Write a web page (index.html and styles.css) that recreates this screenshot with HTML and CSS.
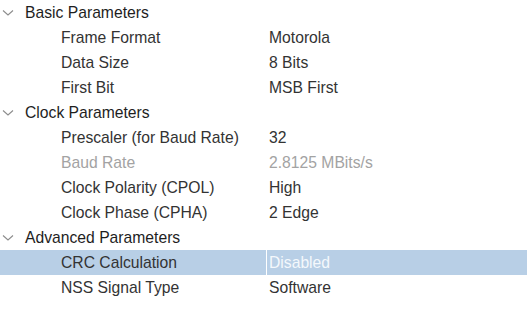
FILE: index.html
```html
<!DOCTYPE html>
<html>
<head>
<meta charset="utf-8">
<link rel="stylesheet" href="styles.css">
</head>
<body>
<div class="tree">
  <div class="row group"><svg class="chev" width="12" height="8" viewBox="0 0 12 8"><path d="M1 1.5 L6 6 L11 1.5" fill="none" stroke="#8c8c8c" stroke-width="1.1"/></svg><span class="glabel">Basic Parameters</span></div>
  <div class="row"><span class="label">Frame Format</span><span class="value">Motorola</span></div>
  <div class="row"><span class="label">Data Size</span><span class="value">8 Bits</span></div>
  <div class="row"><span class="label">First Bit</span><span class="value">MSB First</span></div>
  <div class="row group"><svg class="chev" width="12" height="8" viewBox="0 0 12 8"><path d="M1 1.5 L6 6 L11 1.5" fill="none" stroke="#8c8c8c" stroke-width="1.1"/></svg><span class="glabel">Clock Parameters</span></div>
  <div class="row"><span class="label">Prescaler (for Baud Rate)</span><span class="value">32</span></div>
  <div class="row dim"><span class="label">Baud Rate</span><span class="value">2.8125 MBits/s</span></div>
  <div class="row"><span class="label">Clock Polarity (CPOL)</span><span class="value">High</span></div>
  <div class="row"><span class="label">Clock Phase (CPHA)</span><span class="value">2 Edge</span></div>
  <div class="row group"><svg class="chev" width="12" height="8" viewBox="0 0 12 8"><path d="M1 1.5 L6 6 L11 1.5" fill="none" stroke="#8c8c8c" stroke-width="1.1"/></svg><span class="glabel">Advanced Parameters</span></div>
  <div class="row selected"><span class="label">CRC Calculation</span><span class="value">Disabled</span></div>
  <div class="row"><span class="label">NSS Signal Type</span><span class="value">Software</span></div>
</div>
</body>
</html>
```

FILE: styles.css
```css
html, body {
  margin: 0;
  padding: 0;
  background: #ffffff;
}
body {
  font-family: "Liberation Sans", Arial, sans-serif;
  font-size: 15.7px;
  color: #333333;
  width: 527px;
  height: 334px;
  overflow: hidden;
}
.tree {
  display: flex;
  flex-direction: column;
}
.row {
  display: flex;
  align-items: center;
  height: 25px;
  white-space: nowrap;
}
.chev {
  margin-left: 2px;
  width: 12px;
  margin-right: 11px;
  margin-top: 1px;
}
.glabel {
  color: #1e1e1e;
}
.label {
  width: 205px;
  padding-left: 61px;
  height: 100%;
  display: flex;
  align-items: center;
  border-right: 1px solid transparent;
}
.value {
  padding-left: 2px;
  flex: 1;
  height: 100%;
  display: flex;
  align-items: center;
}
.dim {
  color: #a3a3a3;
}
.selected {
  background: #b8cfe6;
}
.selected .label {
  border-right-color: #ffffff;
}
.selected .value {
  color: #f4f8fc;
}
```
